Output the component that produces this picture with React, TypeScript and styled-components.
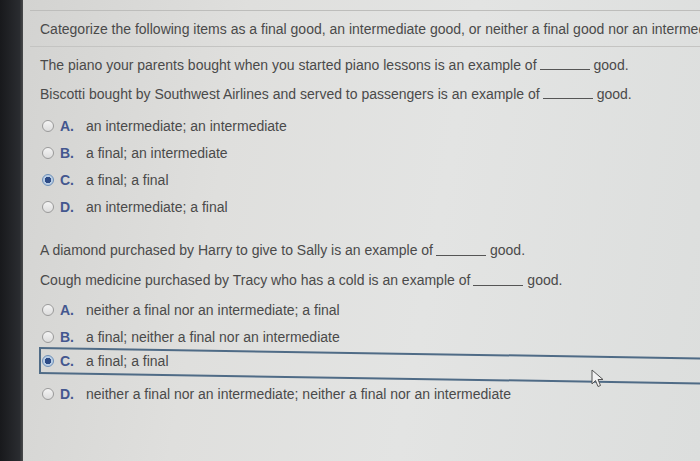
import React from 'react';
import styled, { createGlobalStyle } from 'styled-components';

const GlobalStyle = createGlobalStyle`
  html, body {
    margin: 0;
    padding: 0;
    background: #1e2024;
  }
  body {
    font-family: 'Liberation Sans', Arial, sans-serif;
  }
`;

const Frame = styled.div`
  display: flex;
  width: 700px;
  height: 461px;
  overflow: hidden;
  position: relative;
`;

const Bezel = styled.div`
  width: 23px;
  flex: none;
  background: linear-gradient(90deg, #18191c 0%, #2a2c30 85%, #4a4b4c 100%);
`;

const Screen = styled.div`
  flex: 1;
  min-width: 0;
  padding-left: 7px;
  background: linear-gradient(100deg, #d3d3d1 0%, #dfdfdd 30%, #e3e4e3 60%, #dcdedd 100%);
  color: #4a4a4a;
  font-size: 14px;
  overflow: hidden;
  position: relative;
`;

const TitleRow = styled.div`
  margin-top: 10px;
  height: 35px;
  border-top: 1px solid #bdbdbb;
  border-bottom: 1px solid #c4c4c2;
  display: flex;
  align-items: center;
  padding-left: 10px;
  white-space: nowrap;
  overflow: hidden;
`;

const Question = styled.div<{ $top: number }>`
  margin-top: ${p => p.$top}px;
  padding-left: 10px;
  display: flex;
  flex-direction: column;
`;

const QuestionLine = styled.div<{ $h: number }>`
  height: ${p => p.$h}px;
  display: flex;
  align-items: center;
  white-space: nowrap;
`;

const Blank = styled.span<{ $w: number }>`
  display: inline-block;
  width: ${p => p.$w}px;
  height: 10px;
  border-bottom: 1px solid #555;
  margin: 0 4px 0 3px;
`;

const OptionList = styled.div<{ $top: number }>`
  margin-top: ${p => p.$top}px;
  display: flex;
  flex-direction: column;
`;

const OptionRow = styled.div<{ $boxed?: boolean; $shift?: number }>`
  position: relative;
  height: ${p => (p.$boxed ? 25 : 27)}px;
  margin-top: ${p => p.$shift ?? 0}px;
  display: flex;
  align-items: center;
  padding-left: 12px;
  white-space: nowrap;

  ${p =>
    p.$boxed &&
    `
    &::before {
      content: '';
      position: absolute;
      left: 9px;
      right: -20px;
      top: -1px;
      bottom: -1px;
      border: 2px solid #4f6b86;
      border-right: none;
      transform: skewY(0.9deg);
      transform-origin: left center;
    }
  `}
`;

const Radio = styled.span<{ $on?: boolean }>`
  width: 12px;
  height: 12px;
  border-radius: 50%;
  box-sizing: border-box;
  border: 1px solid ${p => (p.$on ? '#6c8fb8' : '#9a9a9a')};
  background: ${p =>
    p.$on
      ? 'radial-gradient(circle, #2d4b86 0 3px, #b9cde4 3.5px)'
      : 'linear-gradient(180deg, #f4f4f4, #dcdcdc)'};
  flex: none;
`;

const Letter = styled.span`
  font-weight: bold;
  color: #44578f;
  width: 26px;
  margin-left: 6px;
`;

const Cursor = styled.svg`
  position: absolute;
  left: 568px;
  top: 369px;
`;

type Opt = { key: string; text: string };

const first: Opt[] = [
  { key: 'A.', text: 'an intermediate; an intermediate' },
  { key: 'B.', text: 'a final; an intermediate' },
  { key: 'C.', text: 'a final; a final' },
  { key: 'D.', text: 'an intermediate; a final' },
];

const second: Opt[] = [
  { key: 'A.', text: 'neither a final nor an intermediate; a final' },
  { key: 'B.', text: 'a final; neither a final nor an intermediate' },
  { key: 'C.', text: 'a final; a final' },
  { key: 'D.', text: 'neither a final nor an intermediate; neither a final nor an intermediate' },
];

function Options({ items, selected, boxed, top }: { items: Opt[]; selected: string; boxed?: boolean; top: number }) {
  return (
    <OptionList $top={top}>
      {items.map(o => {
        const isSel = o.key === selected;
        const isBoxed = boxed && isSel;
        return (
          <OptionRow
            key={o.key}
            $boxed={isBoxed}
            $shift={isBoxed ? -2 : boxed && o.key === 'D.' ? 7 : 0}
          >
            <Radio $on={isSel} />
            <Letter>{o.key}</Letter>
            <span>{o.text}</span>
          </OptionRow>
        );
      })}
    </OptionList>
  );
}

export default function App() {
  return (
    <Frame>
      <GlobalStyle />
      <Bezel />
      <Screen>
        <TitleRow>
          Categorize the following items as a final good, an intermediate good, or neither a final good nor an intermediate good.
        </TitleRow>
        <Question $top={3}>
          <QuestionLine $h={29}>
            The piano your parents bought when you started piano lessons is an example of
            <Blank $w={50} />good.
          </QuestionLine>
          <QuestionLine $h={29}>
            Biscotti bought by Southwest Airlines and served to passengers is an example of
            <Blank $w={50} />good.
          </QuestionLine>
        </Question>
        <Options items={first} selected="C." top={4} />
        <Question $top={15}>
          <QuestionLine $h={30}>
            A diamond purchased by Harry to give to Sally is an example of
            <Blank $w={50} />good.
          </QuestionLine>
          <QuestionLine $h={30}>
            Cough medicine purchased by Tracy who has a cold is an example of
            <Blank $w={50} />good.
          </QuestionLine>
        </Question>
        <Options items={second} selected="C." boxed top={1} />
        <Cursor width="16" height="20" viewBox="0 0 16 20">
          <path
            d="M1 1 L1 15 L4.5 11.5 L7 17.5 L9.5 16.5 L7 10.5 L12 10.5 Z"
            fill="#f2f2f2"
            stroke="#555"
            strokeWidth="1"
            strokeLinejoin="round"
          />
        </Cursor>
      </Screen>
    </Frame>
  );
}
